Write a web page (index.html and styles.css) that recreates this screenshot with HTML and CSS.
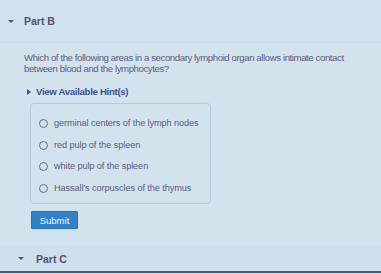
FILE: index.html
```html
<!DOCTYPE html>
<html>
<head>
<meta charset="utf-8">
<link rel="stylesheet" href="styles.css">
</head>
<body>
<div class="page">
  <div class="part-head part-b">
    <span class="caret"></span>
    <span class="part-title">Part B</span>
  </div>
  <div class="part-body">
    <p class="question">Which of the following areas in a secondary lymphoid organ allows intimate contact between blood and the lymphocytes?</p>
    <div class="hint"><span class="hint-caret"></span><span class="hint-text">View Available Hint(s)</span></div>
    <div class="options">
      <label class="option"><span class="radio"></span><span>germinal centers of the lymph nodes</span></label>
      <label class="option"><span class="radio"></span><span>red pulp of the spleen</span></label>
      <label class="option"><span class="radio"></span><span>white pulp of the spleen</span></label>
      <label class="option"><span class="radio"></span><span>Hassall's corpuscles of the thymus</span></label>
    </div>
    <button class="submit">Submit</button>
  </div>
  <div class="part-head part-c">
    <span class="caret"></span>
    <span class="part-title">Part C</span>
  </div>
  <div class="bottom-bar"></div>
</div>
</body>
</html>
```
FILE: styles.css
```css
html, body {
  margin: 0;
  padding: 0;
}
body {
  width: 381px;
  height: 274px;
  overflow: hidden;
  background: #d3e3ee;
  font-family: "Liberation Sans", Arial, sans-serif;
  color: #55587a;
}
.page {
  display: flex;
  flex-direction: column;
  height: 274px;
}
.part-head {
  display: flex;
  align-items: center;
}
.part-b {
  height: 42px;
  padding-left: 8px;
  background: #d0e2ee;
  border-bottom: 1px solid #c8d8e6;
}
.caret {
  width: 0;
  height: 0;
  border-left: 3px solid transparent;
  border-right: 3px solid transparent;
  border-top: 3px solid #4f5570;
  margin-right: 10px;
}
.part-title {
  font-size: 10.5px;
  font-weight: bold;
  color: #4f5370;
}
.part-body {
  padding: 9px 0 0 24px;
}
.question {
  margin: 0;
  font-size: 9.6px;
  letter-spacing: -0.4px;
  line-height: 11px;
  width: 340px;
  color: #5a5c80;
}
.hint {
  display: flex;
  align-items: center;
  margin-top: 12px;
  margin-left: 3px;
}
.hint-caret {
  width: 0;
  height: 0;
  border-top: 3px solid transparent;
  border-bottom: 3px solid transparent;
  border-left: 4px solid #3f4f80;
  margin-right: 5px;
}
.hint-text {
  font-size: 9.6px;
  font-weight: bold;
  letter-spacing: -0.3px;
  color: #3d5190;
}
.options {
  margin: 6px 0 0 6px;
  width: 181px;
  height: 101px;
  border: 1px solid #b8c8d8;
  border-radius: 4px;
  display: flex;
  flex-direction: column;
  padding: 14px 0 0 8px;
  box-sizing: border-box;
  gap: 10.5px;
}
.option {
  display: flex;
  align-items: center;
  font-size: 9.2px;
  letter-spacing: -0.1px;
  line-height: 11px;
  color: #585a7c;
}
.radio {
  width: 7px;
  height: 7px;
  border: 1px solid #6a6e88;
  border-radius: 50%;
  margin-right: 6px;
  flex: none;
}
.submit {
  display: block;
  margin: 7px 0 0 7px;
  width: 47px;
  height: 18px;
  border: 1px solid #2a6fb8;
  border-radius: 1px;
  background: #3280c8;
  color: #f4f8ff;
  font-family: "Liberation Sans", Arial, sans-serif;
  font-size: 9.5px;
  padding: 0;
}
.part-c {
  margin-top: 17px;
  height: 25px;
  padding-left: 18px;
  background: #cfe0ec;
}
.part-c .caret {
  margin-right: 12px;
}
.bottom-bar {
  height: 2px;
  background: #4a5870;
}
```
